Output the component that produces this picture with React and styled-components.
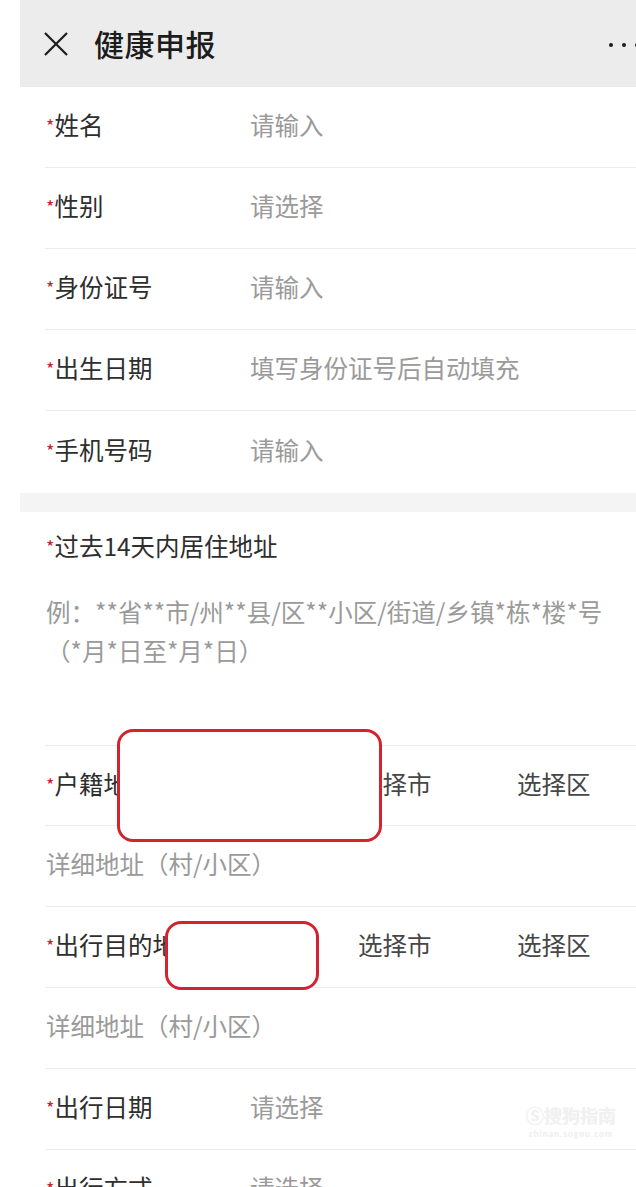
import React from "react";
import styled, { createGlobalStyle } from "styled-components";

const GlobalStyle = createGlobalStyle`
  body {
    margin: 0;
    background: #ffffff;
    font-family: "Noto Sans CJK SC", "Noto Sans", sans-serif;
  }
`;

const Page = styled.div`
  position: relative;
  padding-left: 20px;
  overflow: hidden;
`;

const Header = styled.div`
  height: 87px;
  background: #ececec;
  display: flex;
  align-items: center;
  padding-left: 23px;
  overflow: hidden;
`;

const Title = styled.div`
  margin-left: 25px;
  font-size: 30px;
  font-weight: 500;
  color: #1c1c1c;
  letter-spacing: 0.5px;
  padding-bottom: 2px;
`;

const Dots = styled.div`
  margin-left: auto;
  margin-right: -3px;
  display: flex;
  gap: 9px;
  padding-top: 3px;

  span {
    width: 4px;
    height: 4px;
    border-radius: 50%;
    background: #1c1c1c;
  }
`;

const Rows = styled.div`
  margin-left: 25px;
`;

const Row = styled.div`
  position: relative;
  height: ${(props) => (props.last ? "82px" : "81px")};
  display: flex;
  align-items: center;
  box-sizing: border-box;
  border-top: ${(props) => (props.top ? "1px solid #ececec" : "none")};
  border-bottom: ${(props) => (props.last ? "none" : "1px solid #ececec")};
  padding-left: 1px;
  padding-bottom: 5px;
  font-size: 24.5px;
`;

const Label = styled.div`
  width: 204px;
  flex-shrink: 0;
  color: #2e2e2e;
  white-space: nowrap;
`;

const Star = styled.span`
  color: #c8202a;
  font-size: 18px;
  position: relative;
  top: -2px;
`;

const Value = styled.div`
  color: ${(props) => (props.dark ? "#474747" : "#9a9a9a")};
  width: ${(props) => props.w || "auto"};
  margin-left: ${(props) => props.shift || 0}px;
  flex-shrink: 0;
  white-space: nowrap;
`;

const Band = styled.div`
  height: 19px;
  background: #f4f4f4;
`;

const Section = styled.div`
  margin-left: 26px;
  padding-top: 17px;
  padding-bottom: 75px;
  font-size: 24.5px;
`;

const SectionTitle = styled.div`
  color: #2e2e2e;
  line-height: 34px;
`;

const Example = styled.div`
  margin-top: 27px;
  color: #9a9a9a;
  line-height: 39px;
  white-space: nowrap;
`;

const Mark = styled.div`
  position: absolute;
  left: ${(props) => props.left}px;
  top: ${(props) => props.top}px;
  width: ${(props) => props.width}px;
  height: ${(props) => props.height}px;
  box-sizing: border-box;
  border: 3px solid #d3232e;
  border-radius: 16px;
  background: #ffffff;
`;

const Watermark = styled.div`
  position: absolute;
  right: 20px;
  top: 1102px;
  display: flex;
  flex-direction: column;
  align-items: center;
  color: #f2f2f2;
  text-shadow: 0 0 1px #e2e2e2;
  pointer-events: none;

  b {
    font-size: 18px;
    font-weight: 500;
  }
  small {
    font-size: 8px;
    letter-spacing: 1px;
  }
`;

const CloseIcon = () => (
  <svg width="26" height="26" viewBox="0 0 26 26">
    <path d="M2 2 L24 24 M24 2 L2 24" stroke="#1c1c1c" strokeWidth="2.2" fill="none" />
  </svg>
);

const Field = ({ label, value, last }) => (
  <Row last={last}>
    <Label>
      <Star>*</Star>
      {label}
    </Label>
    <Value>{value}</Value>
  </Row>
);

const AddressRow = ({ label, top, shift = 0, children }) => (
  <Row top={top}>
    <Label>
      <Star>*</Star>
      {label}
    </Label>
    <Value dark shift={shift} w={`${108 - shift}px`}>
      选择省
    </Value>
    <Value dark w="159px">选择市</Value>
    <Value dark>选择区</Value>
    {children}
  </Row>
);

const App = () => {
  return (
    <Page>
      <GlobalStyle />
      <Header>
        <CloseIcon />
        <Title>健康申报</Title>
        <Dots>
          <span />
          <span />
          <span />
        </Dots>
      </Header>
      <Rows>
        <Field label="姓名" value="请输入" />
        <Field label="性别" value="请选择" />
        <Field label="身份证号" value="请输入" />
        <Field label="出生日期" value="填写身份证号后自动填充" />
        <Field label="手机号码" value="请输入" last />
      </Rows>
      <Band />
      <Section>
        <SectionTitle>
          <Star>*</Star>过去14天内居住地址
        </SectionTitle>
        <Example>
          例：**省**市/州**县/区**小区/街道/乡镇*栋*楼*号
          <br />
          （*月*日至*月*日）
        </Example>
      </Section>
      <Rows>
        <AddressRow label="户籍地址" top>
          <Mark left={72} top={-17} width={265} height={113} />
        </AddressRow>
        <Row>
          <Value>详细地址（村/小区）</Value>
        </Row>
        <AddressRow label="出行目的地" shift={-14}>
          <Mark left={120} top={14} width={154} height={69} />
        </AddressRow>
        <Row>
          <Value>详细地址（村/小区）</Value>
        </Row>
        <Field label="出行日期" value="请选择" />
        <Field label="出行方式" value="请选择" />
      </Rows>
      <Watermark>
        <b>Ⓢ搜狗指南</b>
        <small>zhinan.sogou.com</small>
      </Watermark>
    </Page>
  );
};

export default App;
